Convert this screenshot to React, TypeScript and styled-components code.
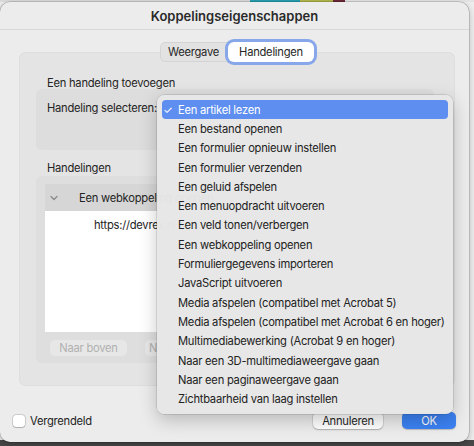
import React from 'react';
import styled, { createGlobalStyle } from 'styled-components';

const GlobalStyle = createGlobalStyle`
  html, body {
    margin: 0;
    padding: 0;
  }
  body {
    font-family: Inter, "Noto Sans", sans-serif;
    font-size: 11.2px;
    letter-spacing: -0.25px;
    color: #242424;
    -webkit-font-smoothing: antialiased;
  }
`;

const Desktop = styled.div`
  position: relative;
  width: 474px;
  height: 446px;
  overflow: hidden;
  box-sizing: border-box;
  padding-top: 2px;
  background:
    linear-gradient(to bottom, transparent 440px, #474747 440px),
    linear-gradient(to bottom, transparent 2px, #ededed 2px),
    linear-gradient(to right, #dadada 250px, #26a0b2 250px, #26a0b2 300px, #b3b84d 300px, #b3b84d 333px, #6b2935 333px, #6b2935 345px, #e4e4e4 345px);
`;

const Window = styled.div`
  width: 469px;
  height: 440px;
  background: #ececec;
  border-radius: 10px;
  box-shadow: 0 0 0 0.5px rgba(0, 0, 0, 0.25), 0 2px 6px rgba(0, 0, 0, 0.25);
  display: flex;
  flex-direction: column;
`;

const TitleBar = styled.div`
  height: 27px;
  flex: none;
  border-bottom: 1px solid #d8d8d8;
  display: flex;
  align-items: center;
  justify-content: center;
  font-size: 13px;
  font-weight: 600;
  letter-spacing: 0;
  color: #2a2a2a;
`;

const Body = styled.div`
  padding: 12px 14px 0 19px;
  display: flex;
  flex-direction: column;
`;

const Tabs = styled.div`
  align-self: center;
  display: flex;
  position: relative;
  z-index: 1;
  margin-bottom: -10px;
  background: #e2e2e2;
  border-radius: 6px;
  box-shadow: inset 0 0 0 0.5px rgba(0, 0, 0, 0.12);
`;

const Tab = styled.div<{ $active?: boolean }>`
  height: 20px;
  box-sizing: border-box;
  display: flex;
  align-items: center;
  justify-content: center;
  color: #262626;
  border-radius: 6px;
  width: ${p => (p.$active ? '86px' : '67px')};
  background: ${p => (p.$active ? '#ffffff' : 'transparent')};
  box-shadow: ${p => (p.$active ? '0 0 0 3px #88a7ea' : 'none')};
  margin-left: ${p => (p.$active ? '1px' : '0')};
`;

const GroupBox = styled.div`
  height: 334px;
  box-sizing: border-box;
  background: #e4e4e4;
  border-radius: 7px;
  box-shadow: inset 0 0 0 0.5px rgba(0, 0, 0, 0.05);
  padding: 24px 21px 0 17px;
  display: flex;
  flex-direction: column;
`;

const SectionLabel = styled.div<{ $top?: number }>`
  line-height: 11px;
  padding: 2px 0 0 11px;
  margin-top: ${p => p.$top ?? 0}px;
  margin-bottom: ${p => (p.$top ? 2 : 0)}px;
`;

const AddBox = styled.div`
  height: 61px;
  box-sizing: border-box;
  background: #dddddd;
  border-radius: 6px;
  padding: 12px 11px 0;
  line-height: 15px;
`;

const TreeBox = styled.div`
  height: 187px;
  box-sizing: border-box;
  background: #dedede;
  border-radius: 6px;
  padding: 8px 9px 0;
  display: flex;
  flex-direction: column;
`;

const TreeHeader = styled.div`
  height: 27px;
  flex: none;
  background: #d6d6d6;
  display: flex;
  align-items: center;
  white-space: nowrap;
`;

const Chevron = styled.svg`
  width: 10px;
  height: 10px;
  margin: 0 20px 0 4px;
`;

const TreeList = styled.div`
  height: 121px;
  flex: none;
  background: #ffffff;
  padding: 7px 0 0 49px;
  box-sizing: border-box;
  line-height: 15px;
  white-space: nowrap;
`;

const TreeButtons = styled.div`
  display: flex;
  gap: 18px;
  margin-top: 8px;
  padding-left: 5px;
`;

const SmallButton = styled.div<{ $w: number }>`
  width: ${p => p.$w}px;
  height: 16px;
  border-radius: 5px;
  background: #e7e7e7;
  color: #b1b1b1;
  display: flex;
  align-items: center;
  justify-content: center;
  white-space: nowrap;
  overflow: hidden;
`;

const Footer = styled.div`
  margin-top: auto;
  padding: 0 13px 13px 13px;
  display: flex;
  align-items: center;
`;

const CheckBox = styled.div`
  width: 12px;
  height: 12px;
  background: #ffffff;
  border-radius: 3px;
  box-shadow: 0 0 0 0.5px rgba(0, 0, 0, 0.25), 0 0.5px 1px rgba(0, 0, 0, 0.15);
  margin-right: 5px;
`;

const Spacer = styled.div`
  flex: 1;
`;

const PushButton = styled.div<{ $primary?: boolean; $w: number }>`
  width: ${p => p.$w}px;
  height: 17px;
  border-radius: 5px;
  display: flex;
  align-items: center;
  justify-content: center;
  background: ${p => (p.$primary ? '#3b82f3' : '#ffffff')};
  color: ${p => (p.$primary ? '#ffffff' : '#262626')};
  box-shadow: ${p => (p.$primary ? '0 0.5px 1px rgba(0,0,0,0.2)' : '0 0 0 0.5px rgba(0,0,0,0.15), 0 0.5px 1.5px rgba(0,0,0,0.2)')};
  margin-left: ${p => (p.$primary ? '19px' : '0')};
`;

const Menu = styled.div`
  position: absolute;
  left: 157px;
  top: 95px;
  width: 296px;
  box-sizing: border-box;
  padding: 5px;
  background: rgba(231, 231, 231, 0.98);
  border-radius: 7px;
  box-shadow: 0 0 0 0.5px rgba(0, 0, 0, 0.2), 0 6px 18px rgba(0, 0, 0, 0.22);
  z-index: 5;
`;

const MenuItem = styled.div<{ $selected?: boolean }>`
  height: 19.3px;
  display: flex;
  align-items: center;
  padding-left: 16px;
  position: relative;
  border-radius: 4px;
  white-space: nowrap;
  background: ${p => (p.$selected ? '#5d8ef0' : 'transparent')};
  color: ${p => (p.$selected ? '#ffffff' : '#222222')};
`;

const Check = styled.span`
  position: absolute;
  left: 1px;
  font-size: 11px;
`;

const actions = [
  'Een artikel lezen',
  'Een bestand openen',
  'Een formulier opnieuw instellen',
  'Een formulier verzenden',
  'Een geluid afspelen',
  'Een menuopdracht uitvoeren',
  'Een veld tonen/verbergen',
  'Een webkoppeling openen',
  'Formuliergegevens importeren',
  'JavaScript uitvoeren',
  'Media afspelen (compatibel met Acrobat 5)',
  'Media afspelen (compatibel met Acrobat 6 en hoger)',
  'Multimediabewerking (Acrobat 9 en hoger)',
  'Naar een 3D-multimediaweergave gaan',
  'Naar een paginaweergave gaan',
  'Zichtbaarheid van laag instellen',
];

export default function App() {
  return (
    <Desktop>
      <GlobalStyle />
      <Window>
        <TitleBar>Koppelingseigenschappen</TitleBar>
        <Body>
          <Tabs>
            <Tab>Weergave</Tab>
            <Tab $active>Handelingen</Tab>
          </Tabs>
          <GroupBox>
            <SectionLabel>Een handeling toevoegen</SectionLabel>
            <AddBox>Handeling selecteren:</AddBox>
            <SectionLabel $top={11}>Handelingen</SectionLabel>
            <TreeBox>
              <TreeHeader>
                <Chevron viewBox="0 0 10 10">
                  <path d="M2 3.5 L5 6.5 L8 3.5" fill="none" stroke="#8a8a8a" strokeWidth="1.3" strokeLinecap="round" strokeLinejoin="round" />
                </Chevron>
                Een webkoppeling openen
              </TreeHeader>
              <TreeList>https://devrex.nl</TreeList>
              <TreeButtons>
                <SmallButton $w={77}>Naar boven</SmallButton>
                <SmallButton $w={80}>Naar beneden</SmallButton>
              </TreeButtons>
            </TreeBox>
          </GroupBox>
        </Body>
        <Footer>
          <CheckBox />
          Vergrendeld
          <Spacer />
          <PushButton $w={70}>Annuleren</PushButton>
          <PushButton $primary $w={54}>OK</PushButton>
        </Footer>
      </Window>
      <Menu>
        {actions.map((a, i) => (
          <MenuItem key={a} $selected={i === 0}>
            {i === 0 && <Check>✓</Check>}
            {a}
          </MenuItem>
        ))}
      </Menu>
    </Desktop>
  );
}
